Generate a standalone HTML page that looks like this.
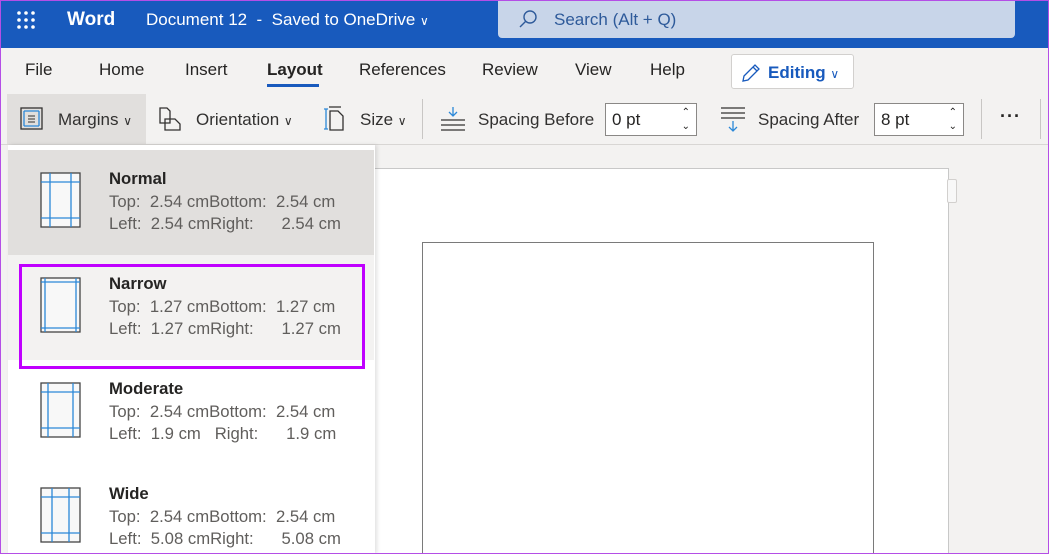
<!DOCTYPE html>
<html style="overflow:hidden;width:1049px;height:554px"><head><meta charset="utf-8"><style>
*{margin:0;padding:0;box-sizing:border-box}
body{width:1049px;height:554px;overflow:hidden;position:relative;background:#f3f2f1;font-family:"Liberation Sans",sans-serif;color:#252423}
.a{position:absolute}
.frame{position:absolute;left:0;top:0;width:1049px;height:554px;border:1px solid #b44ee6;z-index:50;pointer-events:none}
.top{left:0;top:0;width:1049px;height:48px;background:#185abd;color:#fff}
.tab{top:60px;font-size:17px;color:#252423}
.tb{font-size:17px;color:#323130;top:110px}
.item{left:8px;width:366px;height:105px}
.it{position:absolute;font-size:16.7px;line-height:22.5px;color:#605e5c;white-space:nowrap}
.it b{color:#252423;font-size:16.7px}
.spin{top:103px;height:33px;border:1px solid #8a8886;background:#fff;font-size:17px;padding:6px 0 0 6px}
</style></head><body>
<div class="frame"></div>
<div class="a top">
  <svg class="a" style="left:17px;top:11px" width="20" height="20"><g fill="#fff"><circle cx="2" cy="2" r="1.8"/><circle cx="9" cy="2" r="1.8"/><circle cx="16" cy="2" r="1.8"/><circle cx="2" cy="9" r="1.8"/><circle cx="9" cy="9" r="1.8"/><circle cx="16" cy="9" r="1.8"/><circle cx="2" cy="16" r="1.8"/><circle cx="9" cy="16" r="1.8"/><circle cx="16" cy="16" r="1.8"/></g></svg>
  <div class="a" style="left:67px;top:9px;font-size:19px;font-weight:bold">Word</div>
  <div class="a" style="left:146px;top:10px;font-size:17px">Document 12 &nbsp;- &nbsp;Saved to OneDrive <span style="font-size:12px">&#8744;</span></div>
  <div class="a" style="left:498px;top:1px;width:517px;height:37px;background:#c8d5e9;border-radius:0 0 4px 4px;color:#2e5a9a;font-size:17px">
    <svg class="a" style="left:20px;top:8px" width="20" height="20"><circle cx="12" cy="8" r="6" fill="none" stroke="#2e5a9a" stroke-width="1.4"/><path d="M8 12 L2 18" stroke="#2e5a9a" stroke-width="1.4"/></svg>
    <span class="a" style="left:56px;top:9px">Search (Alt + Q)</span>
  </div>
</div>
<div class="a tab" style="left:25px">File</div>
<div class="a tab" style="left:99px">Home</div>
<div class="a tab" style="left:185px">Insert</div>
<div class="a tab" style="left:267px;font-weight:bold">Layout</div>
<div class="a" style="left:267px;top:84px;width:52px;height:3px;background:#185abd"></div>
<div class="a tab" style="left:359px">References</div>
<div class="a tab" style="left:482px">Review</div>
<div class="a tab" style="left:575px">View</div>
<div class="a tab" style="left:650px">Help</div>
<div class="a" style="left:731px;top:54px;width:123px;height:35px;background:#fff;border:1px solid #d2d0ce;border-radius:3px;color:#185abd;font-size:17px;font-weight:bold">
  <svg class="a" style="left:9px;top:8px" width="20" height="20"><path d="M2 18 L3 13 L14 2 L18 6 L7 17 Z M12 4 L16 8" fill="none" stroke="#185abd" stroke-width="1.3"/></svg>
  <span class="a" style="left:36px;top:8px">Editing <span style="font-weight:normal;font-size:12px">&#8744;</span></span>
</div>
<div class="a" style="left:7px;top:94px;width:139px;height:50px;background:#e1dfdd"></div>
<svg class="a" style="left:20px;top:107px" width="24" height="24"><rect x="1" y="1" width="21" height="21" fill="none" stroke="#323130" stroke-width="1.3"/><path d="M4 4h15M4 19h15M4 4v15M19 4v15" stroke="#2b88d8" stroke-width="1.3"/><path d="M8 9h7M8 12h7M8 15h7" stroke="#323130"/></svg>
<div class="a tb" style="left:58px">Margins <span style="font-size:12px">&#8744;</span></div>
<svg class="a" style="left:158px;top:107px" width="24" height="24"><path d="M2 1h7l3 3v12H2z M7 12h10l5 5v6H7z" fill="none" stroke="#323130" stroke-width="1.3"/></svg>
<div class="a tb" style="left:196px">Orientation <span style="font-size:12px">&#8744;</span></div>
<svg class="a" style="left:323px;top:106px" width="22" height="26"><path d="M3 3v20M1 3h4M1 23h4" stroke="#2b88d8" stroke-width="1.3"/><path d="M6 1h12M7 5h8l5 5v14H7z" fill="none" stroke="#323130" stroke-width="1.3"/></svg>
<div class="a tb" style="left:360px">Size <span style="font-size:12px">&#8744;</span></div>
<div class="a" style="left:422px;top:99px;width:1px;height:40px;background:#c8c6c4"></div>
<svg class="a" style="left:440px;top:106px" width="26" height="26"><path d="M13 1v9M9 6l4 4 4-4" fill="none" stroke="#2b88d8" stroke-width="1.3"/><path d="M1 14h24M1 19h24M1 24h24" stroke="#323130" stroke-width="1.3"/></svg>
<div class="a tb" style="left:478px">Spacing Before</div>
<div class="a spin" style="left:605px;width:92px">0 pt<span class="a" style="right:6px;top:2px;font-size:10px;line-height:14px">&#8963;<br>&#8964;</span></div>
<svg class="a" style="left:720px;top:106px" width="26" height="26"><path d="M1 2h24M1 7h24M1 12h24" stroke="#323130" stroke-width="1.3"/><path d="M13 15v10M9 21l4 4 4-4" fill="none" stroke="#2b88d8" stroke-width="1.3"/></svg>
<div class="a tb" style="left:758px">Spacing After</div>
<div class="a spin" style="left:874px;width:90px">8 pt<span class="a" style="right:6px;top:2px;font-size:10px;line-height:14px">&#8963;<br>&#8964;</span></div>
<div class="a" style="left:981px;top:99px;width:1px;height:40px;background:#c8c6c4"></div>
<div class="a" style="left:1000px;top:106px;font-size:18px;font-weight:bold;letter-spacing:1px">···</div>
<div class="a" style="left:1040px;top:99px;width:1px;height:40px;background:#c8c6c4"></div>
<div class="a" style="left:0;top:144px;width:1049px;height:1px;background:#d8d6d4"></div>
<div class="a" style="left:372px;top:168px;width:577px;height:386px;background:#fff;border:1px solid #c8c8c8;border-bottom:none"></div>
<div class="a" style="left:947px;top:179px;width:10px;height:24px;border:1px solid #d2d0ce;border-radius:2px;background:#f8f8f8"></div>
<div class="a" style="left:422px;top:242px;width:452px;height:312px;border:1px solid #7a7a7a;border-bottom:none"></div>
<div class="a" style="left:8px;top:145px;width:367px;height:409px;background:#fff;box-shadow:2px 0 4px rgba(0,0,0,.12)"></div>
<div class="a item" style="top:150px;background:#e1dfdd"></div>
<div class="a item" style="top:255px;background:#f3f2f1"></div>
<div class="a" style="left:19px;top:264px;width:346px;height:105px;border:3px solid #c000ff"></div>
<svg class="a" style="left:40px;top:172px" width="42" height="56"><rect x="1" y="1" width="39" height="54" fill="#f8f8f8" stroke="#444" stroke-width="1.3"/><path d="M10 1v54M31 1v54M1 10h39M1 46h39" stroke="#2b88d8" stroke-width="1.3"/></svg>
<div class="it" style="left:109px;top:168px"><b>Normal</b><br>Top:&nbsp; 2.54 cmBottom:&nbsp; 2.54 cm<br>Left:&nbsp; 2.54 cmRight:&nbsp;&nbsp;&nbsp;&nbsp;&nbsp; 2.54 cm</div>
<svg class="a" style="left:40px;top:277px" width="42" height="56"><rect x="1" y="1" width="39" height="54" fill="#f8f8f8" stroke="#444" stroke-width="1.3"/><path d="M5 1v54M36 1v54M1 5h39M1 51h39" stroke="#2b88d8" stroke-width="1.3"/></svg>
<div class="it" style="left:109px;top:273px"><b>Narrow</b><br>Top:&nbsp; 1.27 cmBottom:&nbsp; 1.27 cm<br>Left:&nbsp; 1.27 cmRight:&nbsp;&nbsp;&nbsp;&nbsp;&nbsp; 1.27 cm</div>
<svg class="a" style="left:40px;top:382px" width="42" height="56"><rect x="1" y="1" width="39" height="54" fill="#f8f8f8" stroke="#444" stroke-width="1.3"/><path d="M8 1v54M33 1v54M1 10h39M1 46h39" stroke="#2b88d8" stroke-width="1.3"/></svg>
<div class="it" style="left:109px;top:378px"><b>Moderate</b><br>Top:&nbsp; 2.54 cmBottom:&nbsp; 2.54 cm<br>Left:&nbsp; 1.9 cm&nbsp;&nbsp; Right:&nbsp;&nbsp;&nbsp;&nbsp;&nbsp; 1.9 cm</div>
<svg class="a" style="left:40px;top:487px" width="42" height="56"><rect x="1" y="1" width="39" height="54" fill="#f8f8f8" stroke="#444" stroke-width="1.3"/><path d="M12 1v54M29 1v54M1 10h39M1 46h39" stroke="#2b88d8" stroke-width="1.3"/></svg>
<div class="it" style="left:109px;top:483px"><b>Wide</b><br>Top:&nbsp; 2.54 cmBottom:&nbsp; 2.54 cm<br>Left:&nbsp; 5.08 cmRight:&nbsp;&nbsp;&nbsp;&nbsp;&nbsp; 5.08 cm</div>
</body></html>
